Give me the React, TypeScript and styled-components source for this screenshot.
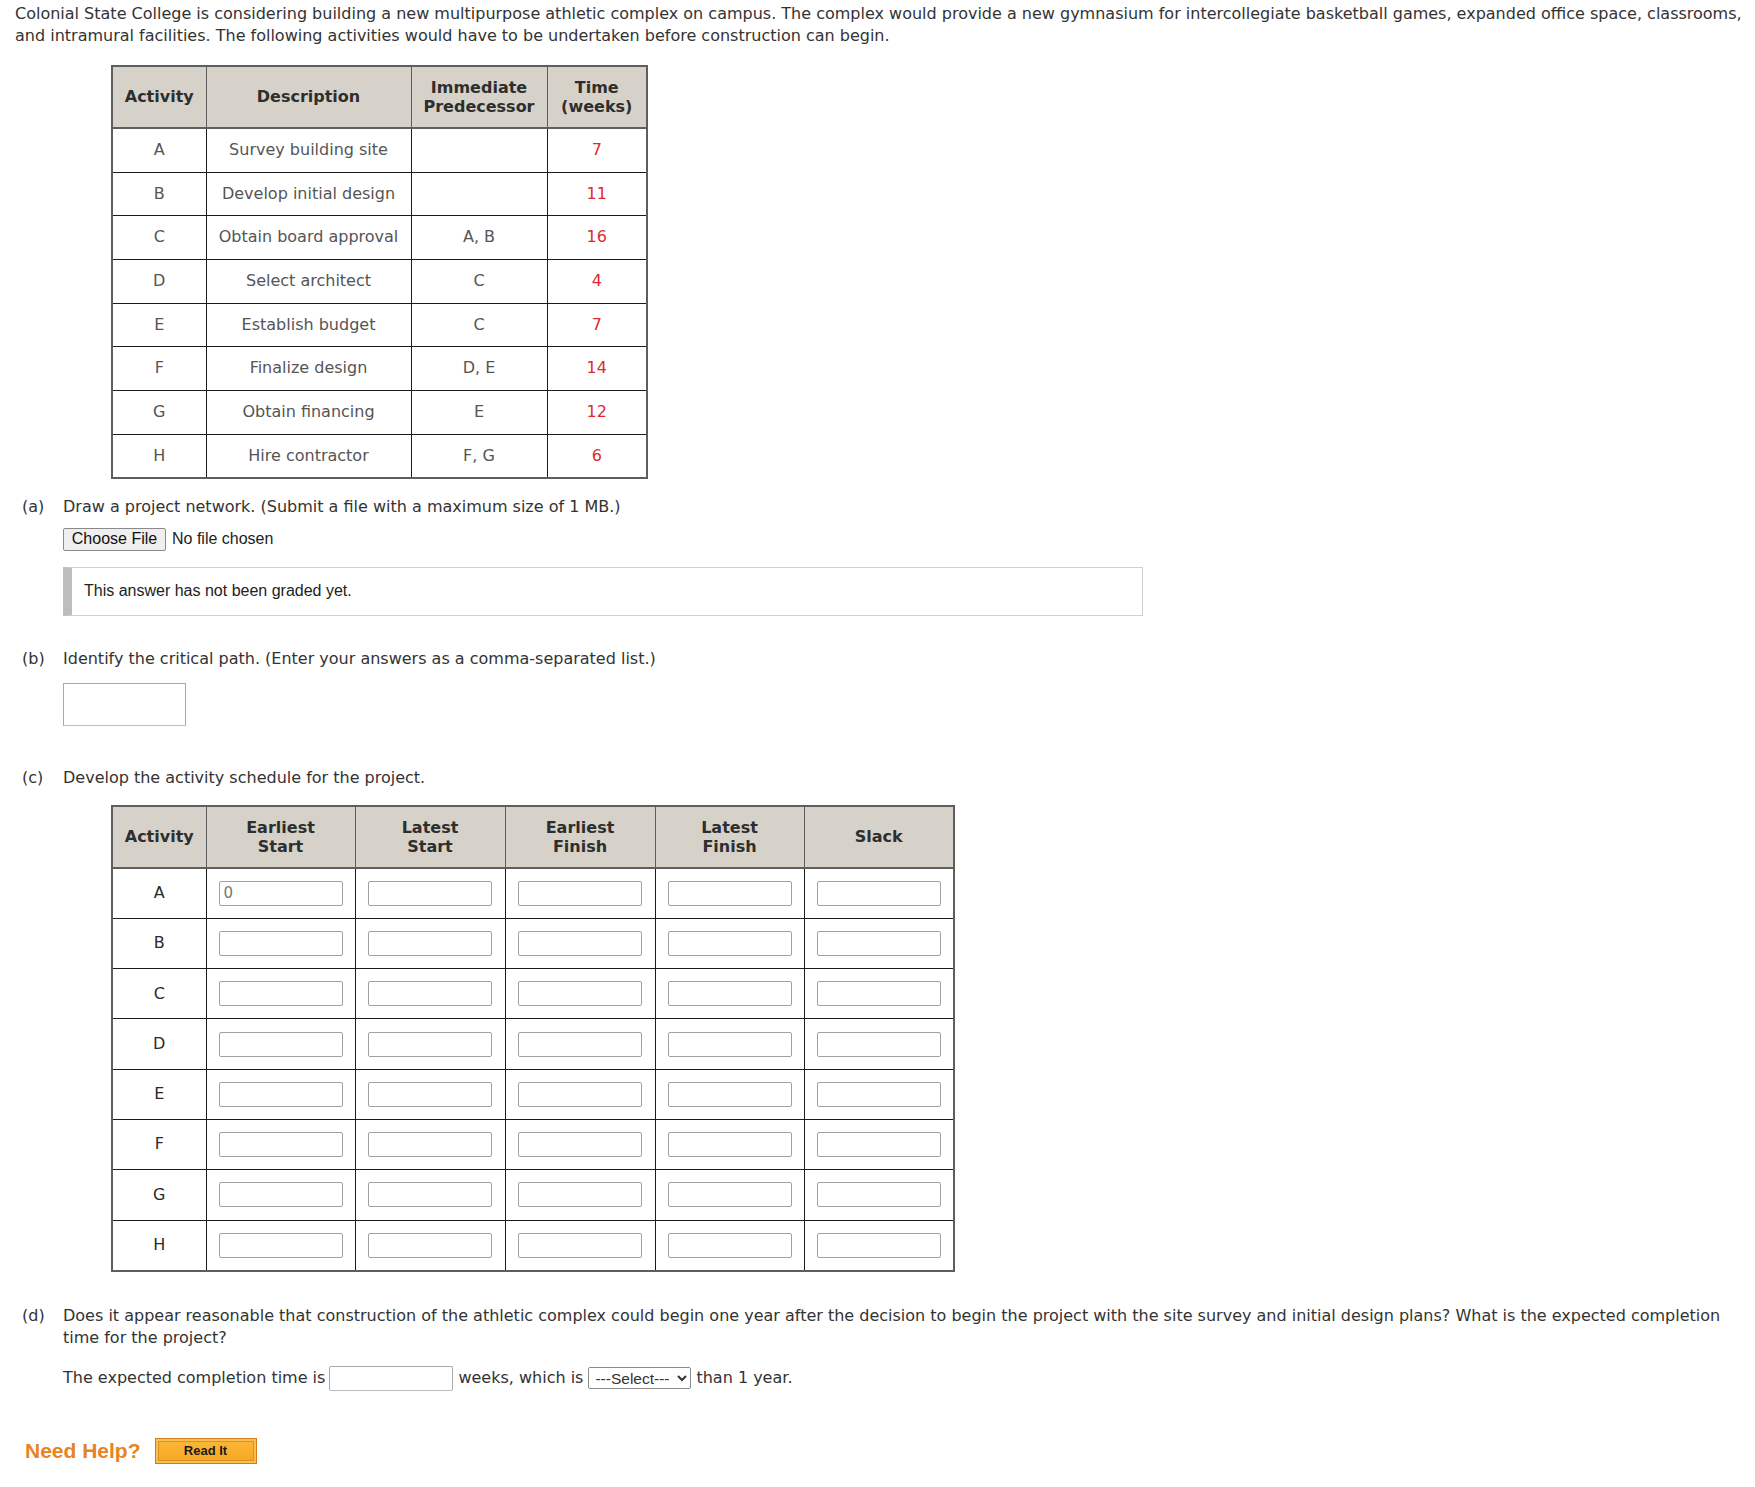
import React from "react";
import styled, { createGlobalStyle } from "styled-components";

const GlobalStyle = createGlobalStyle`
  html, body { margin: 0; padding: 0; background: #ffffff; }
  body { font-family: "DejaVu Sans", Verdana, sans-serif; color: #333333; }
`;

const Page = styled.div`
  padding: 3px 4px 0 15px;
  font-size: 16px;
  line-height: 22.4px;
`;

const Intro = styled.p`
  margin: 0;
`;

const DataTable = styled.table<{ $mt: number; $ml: number; $w: number }>`
  border-collapse: collapse;
  border: 2px solid #5e5e5e;
  margin-top: ${(p) => p.$mt}px;
  margin-left: ${(p) => p.$ml}px;
  width: ${(p) => p.$w}px;
  table-layout: fixed;
`;

const Col = styled.col<{ $w: number }>`
  width: ${(p) => p.$w}px;
`;

const HeadCell = styled.th`
  height: 60px;
  background: #d6d2c9;
  border: 1px solid #5e5e5e;
  border-bottom: 2px solid #5e5e5e;
  font-weight: bold;
  font-size: 16px;
  line-height: 19px;
  color: #2e2e2e;
  text-align: center;
  padding: 0;
`;

const Cell = styled.td<{ $h: number; $red?: boolean; $dark?: boolean }>`
  height: ${(p) => p.$h}px;
  border: 1px solid #1a1a1a;
  text-align: center;
  padding: 0;
  font-size: 16px;
  color: ${(p) => (p.$red ? "#dc2a30" : p.$dark ? "#2a2a2a" : "#555555")};
`;

const Part = styled.div<{ $mt: number }>`
  display: flex;
  margin-top: ${(p) => p.$mt}px;
  padding-left: 7px;
`;

const PartLabel = styled.div`
  width: 41px;
  flex: none;
`;

const PartBody = styled.div`
  flex: 1;
  min-width: 0;
`;

const Question = styled.div``;

const FileRow = styled.div`
  display: flex;
  align-items: center;
  margin-top: 9px;
  height: 23px;
  font-family: "Liberation Sans", Arial, sans-serif;
  font-size: 16px;
`;

const FileButton = styled.button`
  height: 23px;
  width: 103px;
  padding: 0;
  background: #efefef;
  border: 1px solid #8a8a8a;
  border-radius: 2px;
  font-family: "Liberation Sans", Arial, sans-serif;
  font-size: 16px;
  color: #111111;
`;

const FileStatus = styled.span`
  margin-left: 6px;
  color: #222222;
`;

const GradedBox = styled.div`
  margin-top: 16px;
  width: 1058px;
  height: 47px;
  display: flex;
  align-items: center;
  border: 1px solid #d0d0d0;
  border-left: 9px solid #bdbdbd;
  padding-left: 12px;
  font-family: "Liberation Sans", Arial, sans-serif;
  font-size: 16px;
  color: #222222;
`;

const AnswerBox = styled.input<{ $w: number; $h: number }>`
  display: block;
  box-sizing: border-box;
  width: ${(p) => p.$w}px;
  height: ${(p) => p.$h}px;
  border: 1px solid #a9a9a9;
  border-bottom-color: #bdbdbd;
  background: #ffffff;
  margin: 0;
  padding: 0 4px;
  font-family: "DejaVu Sans", Verdana, sans-serif;
  font-size: 15px;
  color: #777777;
  outline: none;
`;

const CritBox = styled(AnswerBox)`
  margin-top: 13px;
`;

const SchedInput = styled(AnswerBox)`
  margin: 0 auto;
  border-radius: 2px;
  border-color: #a0a0a0;
`;

const CompletionRow = styled.div`
  display: flex;
  align-items: center;
  margin-top: 16px;
  height: 25px;
`;

const InlineBox = styled(AnswerBox)`
  display: inline-block;
  margin: 0 5px 0 4px;
  border-radius: 2px;
`;

const Select = styled.select`
  height: 22px;
  width: 103px;
  margin: 0 5px 0 5px;
  padding: 0 0 0 2px;
  border: 1px solid #8c8c8c;
  border-radius: 2px;
  background: #ffffff;
  font-family: "Liberation Sans", Arial, sans-serif;
  font-size: 15.5px;
  color: #333333;
`;

const HelpRow = styled.div`
  display: flex;
  align-items: center;
  margin-top: 47px;
  padding-left: 10px;
  height: 26px;
`;

const HelpText = styled.span`
  font-family: "Liberation Sans", Arial, sans-serif;
  font-weight: bold;
  font-size: 21px;
  color: #e8831f;
`;

const ReadItButton = styled.button`
  margin-left: 14px;
  width: 102px;
  height: 26px;
  padding: 0;
  border: 1px solid #cf7d1c;
  background: linear-gradient(#fbb838, #f6a623);
  box-shadow: inset 0 0 0 2px #f8bf55, inset 0 0 0 3px #e0901f;
  font-family: "Liberation Sans", Arial, sans-serif;
  font-weight: bold;
  font-size: 13px;
  color: #1a1a1a;
`;

const activities = [
  { id: "A", desc: "Survey building site", pred: "", time: "7" },
  { id: "B", desc: "Develop initial design", pred: "", time: "11" },
  { id: "C", desc: "Obtain board approval", pred: "A, B", time: "16" },
  { id: "D", desc: "Select architect", pred: "C", time: "4" },
  { id: "E", desc: "Establish budget", pred: "C", time: "7" },
  { id: "F", desc: "Finalize design", pred: "D, E", time: "14" },
  { id: "G", desc: "Obtain financing", pred: "E", time: "12" },
  { id: "H", desc: "Hire contractor", pred: "F, G", time: "6" },
];

const schedCols: { label: React.ReactNode; w: number }[] = [
  { label: <>Earliest<br />Start</>, w: 149 },
  { label: <>Latest<br />Start</>, w: 150 },
  { label: <>Earliest<br />Finish</>, w: 150 },
  { label: <>Latest<br />Finish</>, w: 149 },
  { label: "Slack", w: 150 },
];

export default function App() {
  return (
    <>
      <GlobalStyle />
      <Page>
        <Intro>
          Colonial State College is considering building a new multipurpose athletic complex on campus. The complex
          would provide a new gymnasium for intercollegiate basketball games, expanded office space, classrooms, and
          intramural facilities. The following activities would have to be undertaken before construction can begin.
        </Intro>

        <DataTable $mt={17} $ml={96} $w={535}>
          <colgroup>
            <Col $w={94} />
            <Col $w={205} />
            <Col $w={136} />
            <Col $w={100} />
          </colgroup>
          <thead>
            <tr>
              <HeadCell>Activity</HeadCell>
              <HeadCell>Description</HeadCell>
              <HeadCell>
                Immediate
                <br />
                Predecessor
              </HeadCell>
              <HeadCell>
                Time
                <br />
                (weeks)
              </HeadCell>
            </tr>
          </thead>
          <tbody>
            {activities.map((a) => (
              <tr key={a.id}>
                <Cell $h={42.7}>{a.id}</Cell>
                <Cell $h={42.7}>{a.desc}</Cell>
                <Cell $h={42.7}>{a.pred}</Cell>
                <Cell $h={42.7} $red>
                  {a.time}
                </Cell>
              </tr>
            ))}
          </tbody>
        </DataTable>

        <Part $mt={17}>
          <PartLabel>(a)</PartLabel>
          <PartBody>
            <Question>Draw a project network. (Submit a file with a maximum size of 1 MB.)</Question>
            <FileRow>
              <FileButton type="button">Choose File</FileButton>
              <FileStatus>No file chosen</FileStatus>
            </FileRow>
            <GradedBox>This answer has not been graded yet.</GradedBox>
          </PartBody>
        </Part>

        <Part $mt={32}>
          <PartLabel>(b)</PartLabel>
          <PartBody>
            <Question>Identify the critical path. (Enter your answers as a comma-separated list.)</Question>
            <CritBox $w={123} $h={43} type="text" />
          </PartBody>
        </Part>

        <Part $mt={41}>
          <PartLabel>(c)</PartLabel>
          <PartBody>
            <Question>Develop the activity schedule for the project.</Question>
          </PartBody>
        </Part>

        <DataTable $mt={15} $ml={96} $w={842}>
          <colgroup>
            <Col $w={94} />
            {schedCols.map((c, i) => (
              <Col key={i} $w={c.w} />
            ))}
          </colgroup>
          <thead>
            <tr>
              <HeadCell>Activity</HeadCell>
              {schedCols.map((c, i) => (
                <HeadCell key={i}>{c.label}</HeadCell>
              ))}
            </tr>
          </thead>
          <tbody>
            {activities.map((a, r) => (
              <tr key={a.id}>
                <Cell $h={49.3} $dark>
                  {a.id}
                </Cell>
                {schedCols.map((_, i) => (
                  <Cell key={i} $h={49.3}>
                    <SchedInput
                      $w={124}
                      $h={25}
                      type="text"
                      defaultValue={r === 0 && i === 0 ? "0" : ""}
                    />
                  </Cell>
                ))}
              </tr>
            ))}
          </tbody>
        </DataTable>

        <Part $mt={33}>
          <PartLabel>(d)</PartLabel>
          <PartBody>
            <Question>
              Does it appear reasonable that construction of the athletic complex could begin one year after the
              decision to begin the project with the site survey and initial design plans? What is the expected
              completion time for the project?
            </Question>
            <CompletionRow>
              The expected completion time is
              <InlineBox $w={124} $h={25} type="text" />
              weeks, which is
              <Select defaultValue="">
                <option value="">---Select---</option>
                <option value="less">less</option>
                <option value="more">more</option>
              </Select>
              than 1 year.
            </CompletionRow>
          </PartBody>
        </Part>

        <HelpRow>
          <HelpText>Need Help?</HelpText>
          <ReadItButton type="button">Read It</ReadItButton>
        </HelpRow>
      </Page>
    </>
  );
}
